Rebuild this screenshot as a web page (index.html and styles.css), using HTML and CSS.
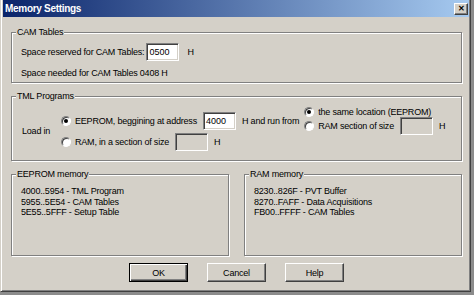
FILE: index.html
```html
<!DOCTYPE html>
<html lang="en">
<head>
    <meta charset="UTF-8">
    <title>Memory Settings</title>
    <link rel="stylesheet" href="styles.css">
</head>
<body>
    <div class="window">
        <div class="titlebar">
            <span class="title">Memory Settings</span>
            <span class="close">&#x2715;</span>
        </div>
        <div class="content">
            <fieldset class="group cam">
                <legend>CAM Tables</legend>
                <div class="row">
                    <span>Space reserved for CAM Tables:</span>
                    <span class="edit">0500</span>
                    <span class="unit">H</span>
                </div>
                <div class="row info">Space needed for CAM Tables 0408 H</div>
            </fieldset>

            <fieldset class="group tml">
                <legend>TML Programs</legend>
                <div class="tml-body">
                    <span class="load-in">Load in</span>
                    <div class="load-options">
                        <div class="option">
                            <span class="radio checked"></span>
                            <span class="opt-text">EEPROM, beggining at address</span>
                            <span class="edit">4000</span>
                            <span class="unit">H and run from</span>
                            <div class="run-options">
                                <div class="option">
                                    <span class="radio checked"></span>
                                    <span class="opt-text">the same location (EEPROM)</span>
                                </div>
                                <div class="option">
                                    <span class="radio"></span>
                                    <span class="opt-text">RAM section of size</span>
                                    <span class="edit disabled"></span>
                                    <span class="unit">H</span>
                                </div>
                            </div>
                        </div>
                        <div class="option">
                            <span class="radio"></span>
                            <span class="opt-text">RAM, in a section of size</span>
                            <span class="edit disabled"></span>
                            <span class="unit">H</span>
                        </div>
                    </div>
                </div>
            </fieldset>

            <div class="memory">
                <fieldset class="group mem">
                    <legend>EEPROM memory</legend>
                    <div>4000..5954 - TML Program</div>
                    <div>5955..5E54 - CAM Tables</div>
                    <div>5E55..5FFF - Setup Table</div>
                </fieldset>
                <fieldset class="group mem">
                    <legend>RAM memory</legend>
                    <div>8230..826F - PVT Buffer</div>
                    <div>8270..FAFF - Data Acquisitions</div>
                    <div>FB00..FFFF - CAM Tables</div>
                </fieldset>
            </div>

            <div class="buttons">
                <button class="default">OK</button>
                <button>Cancel</button>
                <button>Help</button>
            </div>
        </div>
    </div>
</body>
</html>
```

FILE: styles.css
```css
* {
    margin: 0;
    padding: 0;
    box-sizing: border-box;
}

body {
    background-color: #8c8c8c;
    font-family: "Liberation Sans", Arial, sans-serif;
    font-size: 9px;
    letter-spacing: -0.2px;
    white-space: nowrap;
    color: #000;
}

.window {
    width: 471px;
    height: 292px;
    background-color: #d4d0c8;
    border: 1px solid;
    border-top-width: 0;
    border-color: #d4d0c8 #404040 #404040 #d4d0c8;
    box-shadow: inset 1px 0 0 #fff, inset -1px -1px 0 #808080;
}

.titlebar {
    height: 17px;
    margin: 0 1px 0 2px;
    background: linear-gradient(to right, #0a246a, #a6caf0);
    display: flex;
    align-items: center;
    justify-content: space-between;
    padding: 0 1px 0 2px;
}

.title {
    color: white;
    font-weight: bold;
    font-size: 10px;
    letter-spacing: -0.3px;
}

.close {
    width: 14px;
    height: 12px;
    background-color: #d4d0c8;
    border: 1px solid;
    border-color: #fff #404040 #404040 #fff;
    box-shadow: inset -1px -1px 0 #808080;
    font-size: 8px;
    font-weight: bold;
    line-height: 10px;
    letter-spacing: 0;
    text-align: center;
}

.content {
    padding: 9px 8px 0 10px;
}

.group {
    border: 1px solid #808080;
    box-shadow: inset 1px 1px 0 #fff, 1px 1px 0 #fff;
    padding: 0 8px 0 9px;
}

.group legend {
    background-color: #d4d0c8;
    line-height: 12px;
    padding: 0 1px;
    margin-left: -5px;
}

.row {
    display: flex;
    align-items: center;
}

.cam {
    padding-top: 5px;
    padding-bottom: 3px;
}

.cam .row {
    height: 18px;
}

.cam .row .edit {
    margin-left: 2px;
}

.cam .row .unit {
    margin-left: 8px;
}

.cam .info {
    height: 12px;
    margin-top: 6px;
}

.edit {
    flex-shrink: 0;
    width: 33px;
    height: 18px;
    background-color: #fff;
    border: 1px solid;
    border-color: #808080 #fff #fff #808080;
    box-shadow: inset 1px 1px 0 #404040, inset -1px -1px 0 #d4d0c8;
    padding: 3px 0 0 2px;
    line-height: 11px;
    letter-spacing: 0;
}

.edit.disabled {
    background-color: #d4d0c8;
}

.unit {
    margin-left: 6px;
}

.tml {
    margin-top: 7px;
    padding-top: 10px;
    padding-bottom: 10px;
}

.tml-body {
    display: flex;
    align-items: center;
}

.load-in {
    flex-shrink: 0;
    width: 40px;
    padding-left: 1px;
}

.load-options {
    display: flex;
    flex-direction: column;
    gap: 4px;
}

.option {
    display: flex;
    align-items: center;
    height: 17px;
}

.radio {
    flex-shrink: 0;
    position: relative;
    width: 10px;
    height: 10px;
    border-radius: 50%;
    background-color: #fff;
    border: 1px solid;
    border-color: #808080 #fff #fff #808080;
    box-shadow: inset 1px 1px 0 #404040;
    margin-right: 4px;
}

.radio.checked::after {
    content: "";
    position: absolute;
    left: 2px;
    top: 2px;
    width: 4px;
    height: 4px;
    border-radius: 50%;
    background-color: #000;
}

.option .edit {
    margin-left: 6px;
}

.run-options {
    height: 17px;
    display: flex;
    flex-direction: column;
    justify-content: center;
    margin-left: 5px;
}

.run-options .option {
    height: 18px;
}

.memory {
    display: grid;
    grid-template-columns: 1fr 1fr;
    gap: 15px;
    margin-top: 7px;
}

.mem {
    height: 88px;
    padding-top: 6px;
    line-height: 10.5px;
}

.buttons {
    display: flex;
    justify-content: center;
    gap: 19px;
    margin-top: 7px;
}

button {
    width: 59px;
    height: 19px;
    background-color: #d4d0c8;
    border: 1px solid;
    border-color: #fff #404040 #404040 #fff;
    box-shadow: inset -1px -1px 0 #808080;
    font-family: inherit;
    font-size: 9px;
    letter-spacing: -0.2px;
}

button.default {
    border-color: #000;
    box-shadow: inset 1px 1px 0 #fff, inset -1px -1px 0 #404040, inset -2px -2px 0 #808080;
}
```
